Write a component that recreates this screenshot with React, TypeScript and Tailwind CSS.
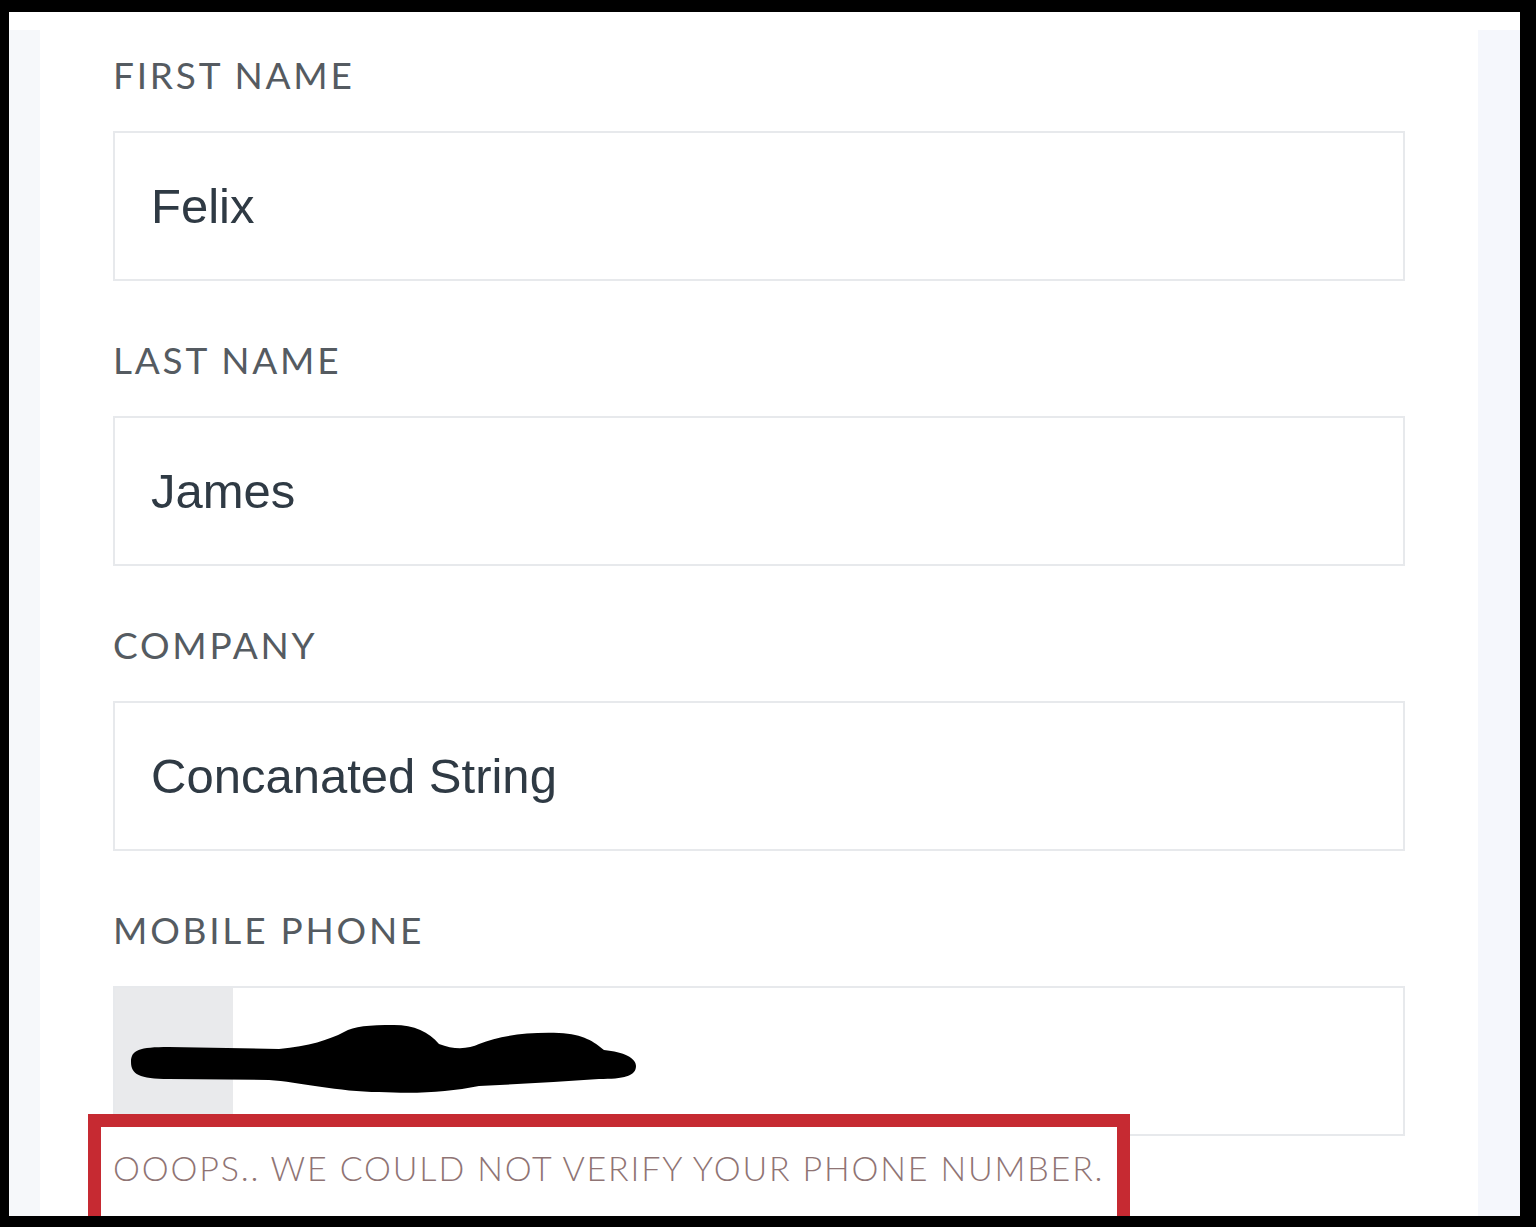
const labelFont = { fontFamily: 'Lato, "Noto Sans", sans-serif' };

type FieldProps = {
  label: string;
  value: string;
};

function Field({ label, value }: FieldProps) {
  return (
    <div className="flex flex-col">
      <label
        className="mb-[38px] text-[37px] leading-none tracking-[0.075em] text-[#555b61]"
        style={labelFont}
      >
        {label}
      </label>
      <div className="flex h-[150px] items-center border-2 border-[#e7e9ec] bg-white pl-[36px]">
        <span className="font-['Liberation_Sans',Arial,sans-serif] text-[49px] leading-none text-[#2f3a44]">
          {value}
        </span>
      </div>
    </div>
  );
}

function Redaction() {
  return (
    <svg
      className="absolute left-[120px] top-[1010px]"
      width="510"
      height="75"
      viewBox="0 0 510 75"
    >
      <path
        fill="#000"
        d="M 2 40 C 2 28, 10 25, 40 25 L 150 27 C 180 24, 200 18, 215 10 C 225 4, 240 3, 265 3 C 285 3, 300 10, 310 22 C 325 28, 340 27, 350 22 C 370 14, 395 10, 430 11 C 455 12, 465 20, 475 28 C 495 30, 507 36, 507 44 C 507 54, 495 57, 470 57 C 430 60, 390 62, 350 64 C 320 70, 290 72, 250 70 C 210 70, 170 60, 140 58 L 40 57 C 10 57, 2 52, 2 40 Z"
      />
    </svg>
  );
}

export default function App() {
  return (
    <div className="h-[1227px] w-[1536px] overflow-hidden bg-black pl-[9px] pr-[16px] pt-[12px]">
      <div className="relative flex h-[1204px] flex-col overflow-hidden bg-white">
        <div className="h-[18px] shrink-0 bg-white" />
        <div className="flex flex-1">
          <div className="w-[31px] shrink-0 bg-[#f6f8fa]" />
          <div className="flex flex-1 flex-col gap-[60px] bg-white px-[73px] pt-[26px]">
            <Field label="FIRST NAME" value="Felix" />
            <Field label="LAST NAME" value="James" />
            <Field label="COMPANY" value="Concanated String" />

            {/* Mobile phone with country prefix */}
            <div className="flex flex-col">
              <label
                className="mb-[38px] text-[37px] leading-none tracking-[0.075em] text-[#555b61]"
                style={labelFont}
              >
                MOBILE PHONE
              </label>
              <div className="flex h-[150px] border-2 border-[#e7e9ec] bg-white">
                <div className="w-[118px] bg-[#e9eaec]" />
                <div className="flex-1" />
              </div>
            </div>
          </div>
          <div className="w-[42px] shrink-0 bg-[#f5f7fc]" />
        </div>

        <Redaction />

        {/* Annotation box around the error */}
        <div className="absolute left-[79px] top-[1102px] h-[123px] w-[1042px] border-[13px] border-[#c62a32] bg-white">
          <p
            className="pl-[12px] pt-[24px] text-[34px] font-light leading-none tracking-[0.054em] text-[#8f7474]"
            style={labelFont}
          >
            OOOPS.. WE COULD NOT VERIFY YOUR PHONE NUMBER.
          </p>
        </div>
      </div>
    </div>
  );
}
